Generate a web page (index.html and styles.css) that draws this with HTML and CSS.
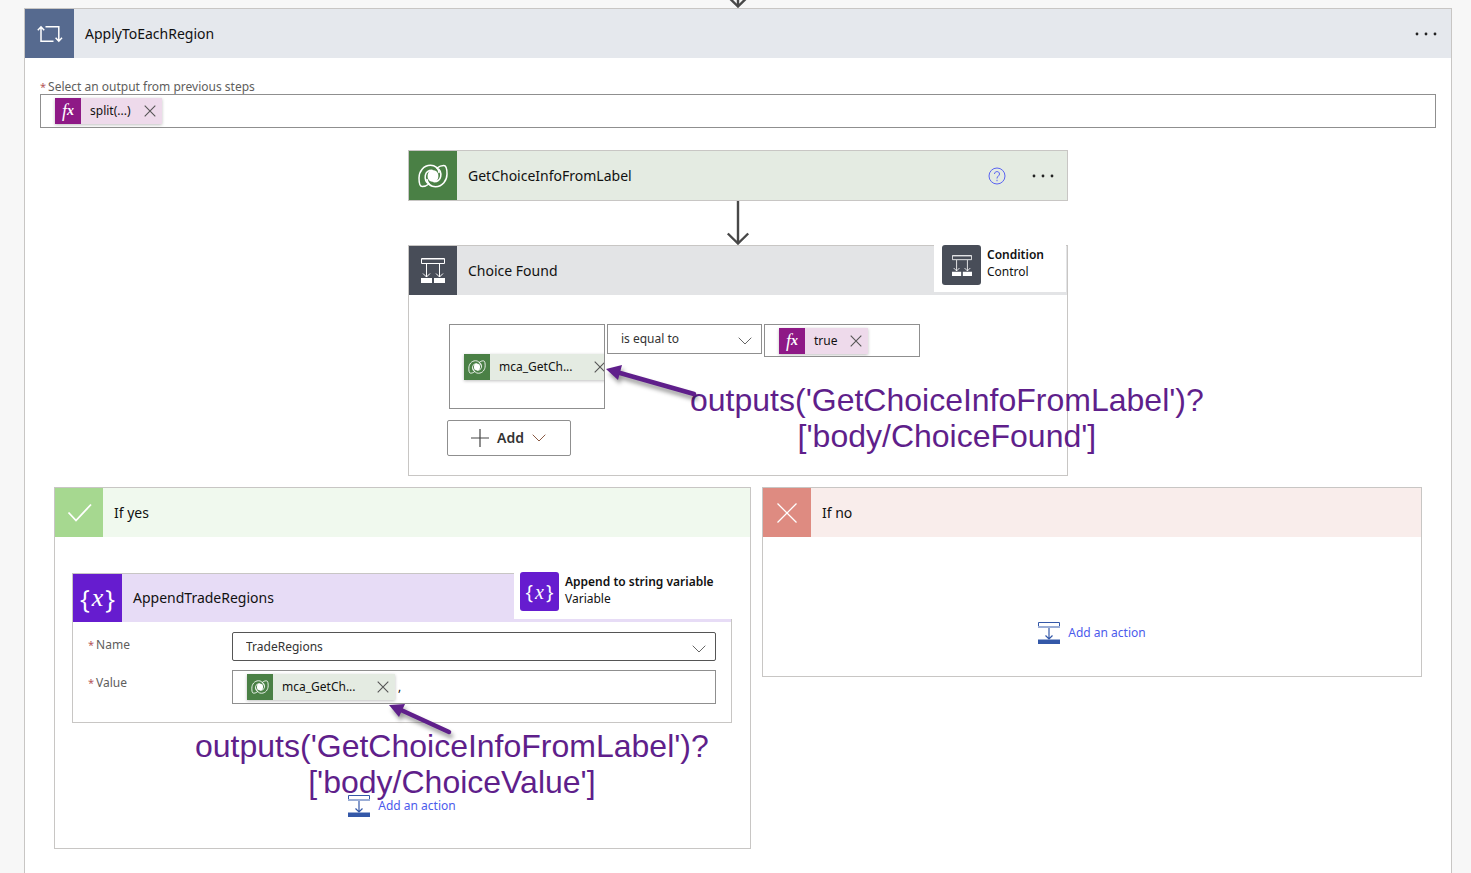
FILE: index.html
```html
<!DOCTYPE html>
<html lang="en">
<head>
<meta charset="utf-8">
<title>ApplyToEachRegion</title>
<meta name="viewport" content="width=device-width, initial-scale=1">
<link rel="stylesheet" href="styles.css">
</head>
<body>
<svg class="defs" aria-hidden="true">
  <symbol id="dataverse" viewBox="0 0 30 24">
    <g fill="none" stroke="#fff" stroke-width="1.5" stroke-linecap="round" stroke-linejoin="round">
      <path d="M21 8.500C20 3.500 16.500 1.300 12.500 1.300 5.500 1.300 1 7.500 1 14 1 18 1.200 22.600 4.200 22.600 6.500 22.600 9 21.600 11 20 7.500 18 6.800 14.500 7.300 11.500 8 8 11 6.300 14 6.300"/>
      <path d="M9 15.500C10 20.500 13.500 22.700 17.500 22.700 24.500 22.700 29 16.500 29 10 29 6 28.800 1.400 25.800 1.400 23.500 1.400 21 2.400 19 4 22.500 6 23.200 9.500 22.700 12.500 22 16 19 17.700 16 17.700"/>
    </g>
    <path fill="#fff" d="M14 6C18.400 6 20.600 8.800 20.400 12 20.200 16 18 18 16 18 11.600 18 9.400 15.200 9.600 12 9.800 8 12 6 14 6z"/>
  </symbol>
  <symbol id="condition" viewBox="0 0 24 25">
    <g fill="none" stroke="#fff" stroke-width="1">
      <path d="M.5.5h23v5H.5zM5.500 6v13M18.500 6v13M2 15.500l3.500 3.500L9 15.500M15 15.500l3.500 3.500 3.500-3.500"/>
      <path d="M.5 1.500h23" stroke-opacity=".5"/>
    </g>
    <path fill="#fff" d="M0 20h11v5H0zM13 20h11v5H13z"/>
  </symbol>
  <symbol id="close" viewBox="0 0 12 12"><path d="M.7.7l10.600 10.600M11.300.7L.7 11.300" fill="none" stroke="#555" stroke-width="1.100"/></symbol>
  <symbol id="chevron" viewBox="0 0 14 8"><path d="M.7.7L7 7 13.300.7" fill="none" stroke="currentColor" stroke-width="1"/></symbol>
  <symbol id="dots" viewBox="0 0 22 4"><g fill="#222"><circle cx="2" cy="2" r="1.400"/><circle cx="11" cy="2" r="1.400"/><circle cx="20" cy="2" r="1.400"/></g></symbol>
  <symbol id="insert" viewBox="0 0 22 22">
    <path d="M.5 5V.5h21V5" fill="none" stroke="#3458a8" stroke-width="1"/>
    <path d="M0 4h22v2H0zM0 17h22v1H0z" fill="#9aadd6"/>
    <path d="M0 18h22v4H0z" fill="#3458a8"/>
    <path d="M11 6v11M7.500 13.500L11 17l3.500-3.500" fill="none" stroke="#3458a8" stroke-width="1.200"/>
  </symbol>
  <symbol id="connector" viewBox="0 0 24 44">
    <path d="M12 0v42M1.800 32.500L12 42.500l10.200-10" fill="none" stroke="#484848" stroke-width="2.400"/>
  </symbol>
</svg>

<div class="canvas">
  <div class="incoming"><svg class="connector"><use href="#connector"/></svg></div>

  <main class="scope">
    <header class="bar bar-scope">
      <span class="bar-icon">
        <svg width="26" height="18" viewBox="0 0 26 18" fill="none" stroke="#fff" stroke-width="1.500"><path d="M16.500 16.200H4V2M.8 5.200L4 1.800 7.200 5.200M8.500 1.800H21.800V16M18.600 12.800L21.800 16.200 25 12.800"/></svg>
      </span>
      <h1 class="title">ApplyToEachRegion</h1>
      <button class="plain" aria-label="More"><svg width="22" height="4"><use href="#dots"/></svg></button>
    </header>

    <div class="scope-body">
      <label class="label" for="source"><span class="req">*</span>Select an output from previous steps</label>
      <div class="field">
        <span class="token token-fx"><span class="token-icon fx">f<sub>x</sub></span><span class="token-text">split(...)</span><button class="plain" aria-label="Remove"><svg width="12" height="12"><use href="#close"/></svg></button></span>
        <input id="source" class="field-input" type="text">
      </div>

      <section class="card lookup">
        <header class="bar bar-green">
          <span class="bar-icon"><svg width="30" height="24"><use href="#dataverse"/></svg></span>
          <h2 class="title">GetChoiceInfoFromLabel</h2>
          <button class="plain help" aria-label="Help"><svg width="18" height="18" viewBox="0 0 18 18" fill="none" stroke="#5a63f2"><circle cx="9" cy="9" r="8"/><path d="M6.500 7C6.500 3.800 11.500 3.800 11.500 7 11.500 9 9 9 9 11.500M9 12.800v1.400"/></svg></button>
          <button class="plain" aria-label="More"><svg width="22" height="4"><use href="#dots"/></svg></button>
        </header>
      </section>

      <svg class="connector"><use href="#connector"/></svg>

      <section class="card condition">
        <header class="bar bar-grey">
          <span class="bar-icon"><svg width="24" height="25"><use href="#condition"/></svg></span>
          <h2 class="title">Choice Found</h2>
        </header>
        <div class="badge badge-condition">
          <span class="badge-icon"><svg width="20" height="21"><use href="#condition"/></svg></span>
          <span class="badge-text"><strong>Condition</strong><span>Control</span></span>
        </div>
        <div class="condition-body">
          <div class="operands">
            <div class="field field-tall">
              <span class="token token-green"><span class="token-icon"><svg width="18" height="14"><use href="#dataverse"/></svg></span><span class="token-text token-long">mca_GetCh...</span><button class="plain" aria-label="Remove"><svg width="12" height="12"><use href="#close"/></svg></button></span>
            </div>
            <div class="select select-operator">
              <select aria-label="Operator"><option>is equal to</option></select>
              <svg class="select-arrow" width="14" height="8"><use href="#chevron"/></svg>
            </div>
            <div class="field">
              <span class="token token-fx"><span class="token-icon fx">f<sub>x</sub></span><span class="token-text">true</span><button class="plain" aria-label="Remove"><svg width="12" height="12"><use href="#close"/></svg></button></span>
              <input class="field-input" type="text" aria-label="Compared value">
            </div>
          </div>
          <button class="add"><svg width="18" height="18" viewBox="0 0 18 18"><path d="M9 0v18M0 9h18" stroke="#444" stroke-width="1.200"/></svg>Add<svg class="add-arrow" width="14" height="8"><use href="#chevron"/></svg></button>
        </div>
        <div class="note note-found">outputs('GetChoiceInfoFromLabel')?<br>['body/ChoiceFound']</div>
        <svg class="pointer pointer-found" width="100" height="50" viewBox="0 0 100 50"><path d="M14 9L88 30" stroke="#5f1f8b" stroke-width="4.500" stroke-linecap="round"/><path d="M0 5L16 1 12 16z" fill="#5f1f8b"/></svg>
      </section>

      <div class="branches">
        <section class="branch branch-yes">
          <header class="bar bar-yes">
            <span class="bar-icon"><svg width="26" height="20" viewBox="0 0 26 20"><path d="M2.500 9.500L10 17.500 25 1.500" fill="none" stroke="#fff" stroke-width="1.800"/></svg></span>
            <h2 class="title">If yes</h2>
          </header>
          <div class="branch-body">
            <section class="card append">
              <header class="bar bar-purple">
                <span class="bar-icon"><span class="variable">{<i>x</i>}</span></span>
                <h3 class="title">AppendTradeRegions</h3>
              </header>
              <div class="badge badge-append">
                <span class="badge-icon"><span class="variable variable-small">{<i>x</i>}</span></span>
                <span class="badge-text"><strong>Append to string variable</strong><span>Variable</span></span>
              </div>
              <div class="form">
                <label class="label" for="name"><span class="req">*</span>Name</label>
                <div class="select select-name">
                  <select id="name"><option>TradeRegions</option></select>
                  <svg class="select-arrow" width="14" height="8"><use href="#chevron"/></svg>
                </div>
                <label class="label" for="value"><span class="req">*</span>Value</label>
                <div class="field">
                  <span class="token token-green"><span class="token-icon"><svg width="18" height="14"><use href="#dataverse"/></svg></span><span class="token-text token-long">mca_GetCh...</span><button class="plain" aria-label="Remove"><svg width="12" height="12"><use href="#close"/></svg></button></span>
                  <input id="value" class="field-input" type="text" value=",">
                </div>
              </div>
              <div class="note note-value">outputs('GetChoiceInfoFromLabel')?<br>['body/ChoiceValue']</div>
              <svg class="pointer pointer-value" width="70" height="40" viewBox="0 0 70 40"><path d="M12 6L60 28" stroke="#5f1f8b" stroke-width="4.500" stroke-linecap="round"/><path d="M0 1L16 0 10 13z" fill="#5f1f8b"/></svg>
            </section>
            <button class="plain action"><svg width="22" height="22"><use href="#insert"/></svg>Add an action</button>
          </div>
        </section>

        <section class="branch branch-no">
          <header class="bar bar-no">
            <span class="bar-icon"><svg width="20" height="20" viewBox="0 0 20 20"><path d="M.5.5l19 19M19.500.5l-19 19" stroke="#fff" stroke-width="1.300"/></svg></span>
            <h2 class="title">If no</h2>
          </header>
          <div class="branch-body">
            <button class="plain action"><svg width="22" height="22"><use href="#insert"/></svg>Add an action</button>
          </div>
        </section>
      </div>
    </div>
  </main>
</div>
</body>
</html>
```

FILE: styles.css
```css
* { box-sizing: border-box; }

body {
  margin: 0;
  background: #f7f7f7;
  color: #111;
  font-family: "Noto Sans", "Open Sans", sans-serif;
  font-size: 12px;
  line-height: 16px;
}

svg { display: block; flex: none; }
button, input, select { font: inherit; color: inherit; }
.defs { position: absolute; width: 0; height: 0; }

.canvas {
  display: flex;
  flex-direction: column;
  min-height: 100vh;
  padding: 0 19px 0 24px;
}
.incoming {
  display: flex;
  align-items: flex-end;
  height: 8px;
  overflow: hidden;
}
.connector { width: 24px; height: 44px; margin: 0 auto; }

.scope {
  flex: 1;
  background: #fff;
  border: 1px solid #c8c6c4;
  border-bottom: 0;
}
.scope-body { padding: 21px 15px 24px; }

/* Header bars */
.bar {
  display: flex;
  align-items: center;
  height: 49px;
  padding-right: 13px;
}
.bar-icon {
  display: flex;
  align-items: center;
  justify-content: center;
  align-self: stretch;
  width: 48px;
}
.title {
  flex: 1;
  margin: 0;
  padding-left: 11px;
  font-size: 14px;
  font-weight: 400;
  line-height: 20px;
}
.bar-scope { padding-right: 14px; background: #e5e8ed; }
.bar-scope .bar-icon { width: 49px; background: #566a8f; }
.bar-green { background: #e4ebe2; }
.bar-green .bar-icon { background: #4a8045; }
.bar-grey { background: #e3e4e6; }
.bar-grey .bar-icon { background: #484d58; }
.bar-yes { background: #f0f9ee; }
.bar-yes .bar-icon { background: #a6d890; }
.bar-no { background: #f9edeb; }
.bar-no .bar-icon { background: #de8b81; }
.bar-purple { height: 48px; background: #e7dcf6; }
.bar-purple .bar-icon { width: 49px; background: #661ccf; }

.plain {
  display: flex;
  align-items: center;
  padding: 0;
  border: 0;
  background: none;
}
.help { margin-right: 26px; }

/* Fields and tokens */
.label { display: block; color: #605e5c; }
.scope-body > .label { margin-bottom: -1px; }
.req { margin-right: 2px; color: #b5585a; font-size: 11px; }

.field {
  display: flex;
  align-items: center;
  height: 34px;
  padding-left: 14px;
  border: 1px solid #8f8f8f;
  overflow: hidden;
  background: #fff;
}
.field-input {
  flex: 1;
  min-width: 0;
  padding: 0 3px;
  border: 0;
  outline: 0;
  background: none;
}
.token {
  display: flex;
  flex: none;
  align-items: center;
  height: 26px;
  padding-right: 6px;
  box-shadow: 0 1px 3px rgba(0, 0, 0, 0.25);
}
.token-fx { background: #eedaeb; }
.token-green { background: #e4ebe2; }
.token-icon {
  display: flex;
  align-items: center;
  justify-content: center;
  align-self: stretch;
  width: 26px;
  background: #4a8045;
}
.fx {
  background: #8e1986;
  color: #fff;
  font: italic 400 18px/20px "Liberation Serif", serif;
}
.fx sub { font-size: 14px; font-weight: 700; line-height: 14px; }
.token-text { padding: 0 13px 0 9px; }
.token-long { width: 104px; }

.select { position: relative; }
.select select {
  width: 100%;
  height: 30px;
  padding: 0 30px 0 13px;
  border: 1px solid #8f8f8f;
  border-radius: 0;
  appearance: none;
  background: #fff;
  color: #333;
}
.select-name select { border-color: #555; border-radius: 2px; }
.select-arrow {
  position: absolute;
  top: 13px;
  right: 10px;
  color: #666;
  pointer-events: none;
}

/* Cards */
.card {
  position: relative;
  width: 100%;
  max-width: 660px;
  margin: 0 auto;
  border: 1px solid #c8c6c4;
  background: #fff;
}
.lookup { margin-top: 22px; }

.badge {
  position: absolute;
  display: flex;
  align-items: flex-start;
  gap: 6px;
  height: 48px;
  background: #fff;
}
.badge-condition { top: -2px; right: 1px; width: 132px; padding: 1px 0 0 8px; }
.badge-append { top: -3px; right: -1px; width: 218px; padding: 1px 0 0 6px; }
.badge-icon {
  display: flex;
  flex: none;
  align-items: center;
  justify-content: center;
  width: 39px;
  height: 39px;
  border-radius: 3px;
  background: #484d58;
}
.badge-condition .badge-icon { height: 40px; }
.badge-append .badge-icon { background: #661ccf; }
.badge-text { display: flex; flex-direction: column; padding-top: 1px; line-height: 17px; white-space: nowrap; }
.badge-text strong { font-weight: 600; }

.variable {
  display: flex;
  align-items: center;
  gap: 2px;
  color: #fff;
  font: 26px/36px "Open Sans", sans-serif;
}
.variable i { font: italic 26px/32px "Liberation Serif", serif; }
.variable-small { font-size: 20px; }
.variable-small i { font-size: 20px; }

.condition-body { padding: 29px 147px 19px 38px; }
.operands {
  display: grid;
  grid-template-columns: 156fr 155fr 156fr;
  align-items: start;
  gap: 2px;
  margin-left: 2px;
}
.operands .field { height: 33px; }
.operands .field-tall { height: 85px; }

.add {
  display: flex;
  align-items: center;
  gap: 8px;
  width: 124px;
  height: 36px;
  margin-top: 11px;
  padding: 0 0 0 23px;
  border: 1px solid #8f8f8f;
  border-radius: 2px;
  background: #fff;
  color: #333;
  font-size: 14px;
  font-weight: 600;
}
.add-arrow { color: #8a5a44; }

/* Branches */
.branches {
  display: grid;
  grid-template-columns: 697fr 660fr;
  align-items: start;
  gap: 11px;
  margin: 11px 14px 0;
}
.branch { border: 1px solid #c8c6c4; background: #fff; }
.branch-body { display: flex; flex-direction: column; align-items: center; }
.branch-yes .branch-body { padding: 36px 18px 31px 17px; }
.branch-no .branch-body { padding: 85px 17px 32px; }
.action { gap: 8px; color: #4b5bec; }
.append + .action { margin-top: 72px; }

.form {
  display: grid;
  grid-template-columns: 144px 1fr;
  gap: 9px 0;
  padding: 10px 15px 18px;
}
.form .label { padding-top: 5px; }
.select-name select { height: 29px; }

/* Annotations over the flow */
.note {
  position: absolute;
  color: #5f1f8b;
  font: 32px/36px "Liberation Sans", Arial, sans-serif;
  text-align: center;
  white-space: nowrap;
}
.note-found { top: 136px; left: 281px; }
.note-value { top: 154px; left: 122px; }
.pointer { position: absolute; filter: drop-shadow(2px 4px 2px rgba(0, 0, 0, 0.4)); }
.pointer-found { top: 118px; left: 197px; }
.pointer-value { top: 130px; left: 316px; }
```
